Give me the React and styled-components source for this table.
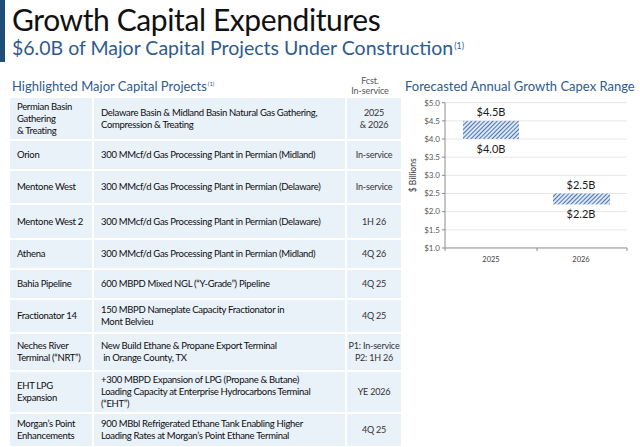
import * as React from 'react';
import styled, { createGlobalStyle } from 'styled-components';

const GlobalStyle = createGlobalStyle`
  html, body {
    margin: 0;
    padding: 0;
    background: #ffffff;
  }
  body {
    font-family: Lato, "Open Sans", sans-serif;
    color: #1a1a1a;
  }
`;

const Page = styled.div`
  width: 640px;
  height: 447px;
  overflow: hidden;
`;

const Header = styled.header`
  border-left: 5px solid #1f4e79;
  height: 62px;
  padding-left: 7px;
  box-sizing: border-box;
`;

const Title = styled.h1`
  margin: 0;
  padding-top: 2px;
  font-weight: 400;
  font-size: 30px;
  letter-spacing: -0.4px;
  line-height: 34px;
  color: #111;
`;

const Subtitle = styled.h2`
  margin: 0;
  font-weight: 400;
  font-size: 19.5px;
  line-height: 24px;
  color: #2e5b8f;
`;

const Sup = styled.sup`
  font-size: 0.45em;
  vertical-align: top;
  position: relative;
  top: -2px;
  margin-left: 1px;
`;

const Body = styled.div`
  display: flex;
  margin-top: 14px;
`;

const Projects = styled.section`
  width: 387px;
  margin-left: 10px;
`;

const ProjectsHead = styled.div`
  display: flex;
  justify-content: space-between;
  align-items: flex-end;
  height: 22px;
`;

const SectionTitle = styled.h3`
  margin: 0;
  padding: 0 0 4px 2px;
  font-weight: 400;
  font-size: 13px;
  line-height: 16px;
  color: #2e5b8f;
  white-space: nowrap;
`;

const FcstLabel = styled.div`
  width: 54px;
  text-align: center;
  font-size: 9px;
  letter-spacing: -0.1px;
  line-height: 10px;
  color: #555;
  padding-bottom: 2px;
`;

const Table = styled.div`
  display: grid;
  grid-template-columns: 82px 251px 54px;
  gap: 2px;
  background: #ffffff;
`;

const Cell = styled.div`
  background: #e9f1f9;
  display: flex;
  align-items: center;
  justify-content: ${(p) => (p.$center ? 'center' : 'flex-start')};
  text-align: ${(p) => (p.$center ? 'center' : 'left')};
  height: ${(p) => p.$h}px;
  box-sizing: border-box;
  padding: 0 ${(p) => (p.$center ? '0' : '7px')};
  font-size: ${(p) => (p.$center ? '9px' : '9.5px')};
  letter-spacing: ${(p) => (p.$center ? '-0.2px' : '-0.3px')};
  line-height: 12px;
  color: ${(p) => (p.$center ? '#333' : '#0d0d0d')};
  white-space: pre;
`;

const Chart = styled.section`
  flex: 1;
  padding-left: 8px;
`;

const ChartTitle = styled.h3`
  margin: 0;
  padding-bottom: 4px;
  box-sizing: border-box;
  font-weight: 400;
  font-size: 13px;
  line-height: 16px;
  color: #2e5b8f;
  white-space: nowrap;
  height: 22px;
  display: flex;
  align-items: flex-end;
`;

const rows = [
  { name: 'Permian Basin\nGathering\n& Treating', desc: 'Delaware Basin & Midland Basin Natural Gas Gathering,\nCompression & Treating', date: '2025\n& 2026', h: 41 },
  { name: 'Orion', desc: '300 MMcf/d Gas Processing Plant in Permian (Midland)', date: 'In-service', h: 28 },
  { name: 'Mentone West', desc: '300 MMcf/d Gas Processing Plant in Permian (Delaware)', date: 'In-service', h: 32 },
  { name: 'Mentone West 2', desc: '300 MMcf/d Gas Processing Plant in Permian (Delaware)', date: '1H 26', h: 33 },
  { name: 'Athena', desc: '300 MMcf/d Gas Processing Plant in Permian (Midland)', date: '4Q 26', h: 28 },
  { name: 'Bahia Pipeline', desc: '600 MBPD Mixed NGL (\u201CY-Grade\u201D) Pipeline', date: '4Q 25', h: 28 },
  { name: 'Fractionator 14', desc: '150 MBPD Nameplate Capacity Fractionator in\nMont Belvieu', date: '4Q 25', h: 32 },
  { name: 'Neches River\nTerminal (\u201CNRT\u201D)', desc: 'New Build Ethane & Propane Export Terminal\n in Orange County, TX', date: 'P1: In-service\nP2: 1H 26', h: 36 },
  { name: 'EHT LPG\nExpansion', desc: '+300 MBPD Expansion of LPG (Propane & Butane)\nLoading Capacity at Enterprise Hydrocarbons Terminal\n(\u201CEHT\u201D)', date: 'YE 2026', h: 40 },
  { name: 'Morgan\u2019s Point\nEnhancements', desc: '900 MBbl Refrigerated Ethane Tank Enabling Higher\nLoading Rates at Morgan\u2019s Point Ethane Terminal', date: '4Q 25', h: 32 },
];

const ticks = ['$5.0', '$4.5', '$4.0', '$3.5', '$3.0', '$2.5', '$2.0', '$1.5', '$1.0'];
const top = 4.7;
const step = 18.16;
const yOf = (v) => top + ((5 - v) / 0.5) * step;

function CapexChart() {
  const axisX = 40;
  const right = 222;
  const bottom = yOf(1);
  const bars = [
    { x: 58, w: 56, hi: 4.5, lo: 4.0, year: '2025', cx: 86 },
    { x: 148, w: 57, hi: 2.5, lo: 2.2, year: '2026', cx: 176 },
  ];
  return (
    <svg width="240" height="175" viewBox="0 0 240 175">
      <defs>
        <pattern id="hatch" width="3" height="3" patternUnits="userSpaceOnUse" patternTransform="rotate(45)">
          <rect width="3" height="3" fill="#dce6f4" />
          <line x1="0" y1="0" x2="0" y2="3" stroke="#4470b2" strokeWidth="1.9" />
        </pattern>
      </defs>
      {ticks.map((t, i) => {
        const y = top + i * step;
        return (
          <g key={t}>
            {i < ticks.length - 1 && <line x1={axisX} x2={right} y1={y} y2={y} stroke="#e6e6e6" strokeWidth="1" />}
            <line x1={axisX - 3} x2={axisX} y1={y} y2={y} stroke="#8c8c8c" strokeWidth="1" />
            <text x={axisX - 5} y={y + 2.8} textAnchor="end" fontSize="8" fill="#595959" fontFamily="Lato, sans-serif">{t}</text>
          </g>
        );
      })}
      <line x1={axisX} x2={axisX} y1={top} y2={bottom} stroke="#8c8c8c" strokeWidth="1" />
      <line x1={axisX} x2={right} y1={bottom} y2={bottom} stroke="#8c8c8c" strokeWidth="1" />
      {[axisX, 132, right].map((x) => (
        <line key={x} x1={x} x2={x} y1={bottom} y2={bottom + 3} stroke="#8c8c8c" strokeWidth="1" />
      ))}
      <text transform={`translate(11 ${yOf(3)}) rotate(-90)`} textAnchor="middle" fontSize="8.5" fill="#333" fontFamily="Lato, sans-serif">$ Billions</text>
      {bars.map((b) => (
        <g key={b.year}>
          <rect x={b.x} y={yOf(b.hi)} width={b.w} height={yOf(b.lo) - yOf(b.hi)} fill="url(#hatch)" />
          <text x={b.cx} y={yOf(b.hi) - 5} textAnchor="middle" fontSize="11" fill="#1a1a1a" fontFamily="Lato, sans-serif">{`$${b.hi.toFixed(1)}B`}</text>
          <text x={b.cx} y={yOf(b.lo) + 14} textAnchor="middle" fontSize="11" fill="#1a1a1a" fontFamily="Lato, sans-serif">{`$${b.lo.toFixed(1)}B`}</text>
          <text x={b.cx} y={bottom + 14} textAnchor="middle" fontSize="7.5" fill="#404040" fontFamily="Lato, sans-serif">{b.year}</text>
        </g>
      ))}
    </svg>
  );
}

export default function App() {
  return (
    <Page>
      <GlobalStyle />
      <Header>
        <Title>Growth Capital Expenditures</Title>
        <Subtitle>
          $6.0B of Major Capital Projects Under Construction<Sup>(1)</Sup>
        </Subtitle>
      </Header>
      <Body>
        <Projects>
          <ProjectsHead>
            <SectionTitle>
              Highlighted Major Capital Projects<Sup>(1)</Sup>
            </SectionTitle>
            <FcstLabel>Fcst.<br />In-service</FcstLabel>
          </ProjectsHead>
          <Table>
            {rows.map((r) => (
              <React.Fragment key={r.name}>
                <Cell $h={r.h}>{r.name}</Cell>
                <Cell $h={r.h}>{r.desc}</Cell>
                <Cell $h={r.h} $center>{r.date}</Cell>
              </React.Fragment>
            ))}
          </Table>
        </Projects>
        <Chart>
          <ChartTitle>Forecasted Annual Growth Capex Range</ChartTitle>
          <CapexChart />
        </Chart>
      </Body>
    </Page>
  );
}
